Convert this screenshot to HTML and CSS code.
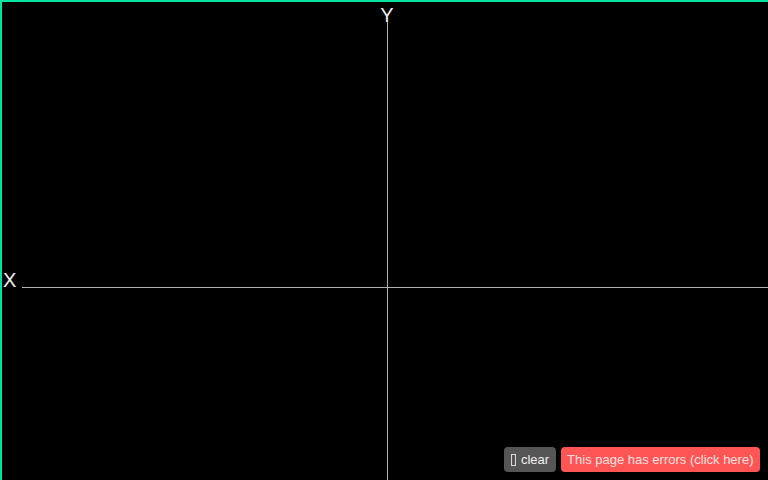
FILE: index.html
```html
<!DOCTYPE html>
<html lang="en">
<head>
    <meta charset="UTF-8">
    <meta name="viewport" content="width=device-width, initial-scale=1.0">
    <title>Plot</title>
    <link rel="stylesheet" href="styles.css">
</head>
<body>
    <div class="stage">
        <svg class="plot" width="766" height="478" viewBox="0 0 766 478">
            <line class="axis" x1="385.5" y1="20" x2="385.5" y2="478"></line>
            <line class="axis" x1="20" y1="285.5" x2="766" y2="285.5"></line>
            <text class="axis-label" x="385" y="20" text-anchor="middle">Y</text>
            <text class="axis-label" x="1" y="285">X</text>
        </svg>
    </div>
    <div class="toolbar">
        <button class="btn btn-clear"><span class="icon-box"></span>clear</button>
        <button class="btn btn-error">This page has errors (click here)</button>
    </div>
</body>
</html>
```

FILE: styles.css
```css
html, body {
    margin: 0;
    padding: 0;
    background: #000;
    overflow: hidden;
}
body {
    font-family: "Liberation Sans", Arial, sans-serif;
    height: 480px;
}
.stage {
    height: 478px;
    border-top: 2px solid #00e6a0;
    border-left: 2px solid #00e6a0;
}
.plot {
    display: block;
}
.axis {
    stroke: #b0b0b0;
    stroke-width: 1;
}
.axis-label {
    fill: #f0f0f0;
    font-family: "Liberation Sans", Arial, sans-serif;
    font-size: 20px;
}
.toolbar {
    position: fixed;
    right: 8px;
    bottom: 8px;
    display: flex;
    gap: 5px;
}
.btn {
    height: 25px;
    border: none;
    border-radius: 4px;
    padding: 0 6.5px;
    font-family: "Liberation Sans", Arial, sans-serif;
    font-size: 13px;
    display: flex;
    align-items: center;
}
.btn-clear {
    background: #555;
    color: #f2f2f2;
}
.icon-box {
    width: 3px;
    height: 10px;
    border: 1px solid #d8d8d8;
    margin-right: 5px;
}
.btn-error {
    background: #f55;
    color: #ffe0e0;
}
```
